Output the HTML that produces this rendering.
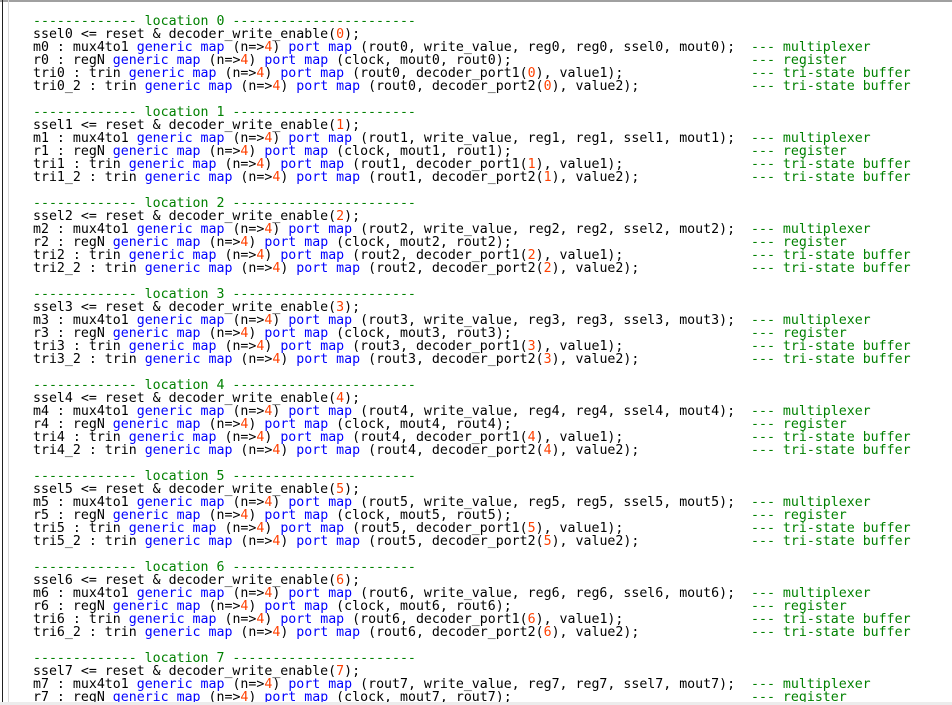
<!DOCTYPE html>
<html><head><meta charset="utf-8"><style>
html,body{margin:0;padding:0;background:#fff;width:952px;height:705px;overflow:hidden;position:relative}
.top{position:absolute;left:0;top:0;width:952px;height:2px;background:#a0a0a0}
.l1{position:absolute;left:2px;top:0;width:1px;height:705px;background:#202020}
.l2{position:absolute;left:8px;top:0;width:1px;height:705px;background:#d8d8d8}
.bot{position:absolute;left:0;top:702px;width:952px;height:3px;background:#ececec}
pre{position:absolute;left:33px;top:15px;margin:0;font-family:"DejaVu Sans Mono","Liberation Mono",monospace;font-size:13.25px;line-height:13px;color:#000;letter-spacing:0}
.k{color:#0000ff}.n{color:#ff4000}.c{color:#008000}
</style></head><body>
<div class="top"></div><div class="l1"></div><div class="l2"></div>
<pre>
<span class="c">------------- location 0 -----------------------</span>
ssel0 &lt;= reset &amp; decoder_write_enable(<span class="n">0</span>);
m0 : mux4to1 <span class="k">generic map</span> (n=&gt;<span class="n">4</span>) <span class="k">port map</span> (rout0, write_value, reg0, reg0, ssel0, mout0);  <span class="c">--- multiplexer</span>
r0 : regN <span class="k">generic map</span> (n=&gt;<span class="n">4</span>) <span class="k">port map</span> (clock, mout0, rout0);                              <span class="c">--- register</span>
tri0 : trin <span class="k">generic map</span> (n=&gt;<span class="n">4</span>) <span class="k">port map</span> (rout0, decoder_port1(<span class="n">0</span>), value1);                <span class="c">--- tri-state buffer</span>
tri0_2 : trin <span class="k">generic map</span> (n=&gt;<span class="n">4</span>) <span class="k">port map</span> (rout0, decoder_port2(<span class="n">0</span>), value2);              <span class="c">--- tri-state buffer</span>

<span class="c">------------- location 1 -----------------------</span>
ssel1 &lt;= reset &amp; decoder_write_enable(<span class="n">1</span>);
m1 : mux4to1 <span class="k">generic map</span> (n=&gt;<span class="n">4</span>) <span class="k">port map</span> (rout1, write_value, reg1, reg1, ssel1, mout1);  <span class="c">--- multiplexer</span>
r1 : regN <span class="k">generic map</span> (n=&gt;<span class="n">4</span>) <span class="k">port map</span> (clock, mout1, rout1);                              <span class="c">--- register</span>
tri1 : trin <span class="k">generic map</span> (n=&gt;<span class="n">4</span>) <span class="k">port map</span> (rout1, decoder_port1(<span class="n">1</span>), value1);                <span class="c">--- tri-state buffer</span>
tri1_2 : trin <span class="k">generic map</span> (n=&gt;<span class="n">4</span>) <span class="k">port map</span> (rout1, decoder_port2(<span class="n">1</span>), value2);              <span class="c">--- tri-state buffer</span>

<span class="c">------------- location 2 -----------------------</span>
ssel2 &lt;= reset &amp; decoder_write_enable(<span class="n">2</span>);
m2 : mux4to1 <span class="k">generic map</span> (n=&gt;<span class="n">4</span>) <span class="k">port map</span> (rout2, write_value, reg2, reg2, ssel2, mout2);  <span class="c">--- multiplexer</span>
r2 : regN <span class="k">generic map</span> (n=&gt;<span class="n">4</span>) <span class="k">port map</span> (clock, mout2, rout2);                              <span class="c">--- register</span>
tri2 : trin <span class="k">generic map</span> (n=&gt;<span class="n">4</span>) <span class="k">port map</span> (rout2, decoder_port1(<span class="n">2</span>), value1);                <span class="c">--- tri-state buffer</span>
tri2_2 : trin <span class="k">generic map</span> (n=&gt;<span class="n">4</span>) <span class="k">port map</span> (rout2, decoder_port2(<span class="n">2</span>), value2);              <span class="c">--- tri-state buffer</span>

<span class="c">------------- location 3 -----------------------</span>
ssel3 &lt;= reset &amp; decoder_write_enable(<span class="n">3</span>);
m3 : mux4to1 <span class="k">generic map</span> (n=&gt;<span class="n">4</span>) <span class="k">port map</span> (rout3, write_value, reg3, reg3, ssel3, mout3);  <span class="c">--- multiplexer</span>
r3 : regN <span class="k">generic map</span> (n=&gt;<span class="n">4</span>) <span class="k">port map</span> (clock, mout3, rout3);                              <span class="c">--- register</span>
tri3 : trin <span class="k">generic map</span> (n=&gt;<span class="n">4</span>) <span class="k">port map</span> (rout3, decoder_port1(<span class="n">3</span>), value1);                <span class="c">--- tri-state buffer</span>
tri3_2 : trin <span class="k">generic map</span> (n=&gt;<span class="n">4</span>) <span class="k">port map</span> (rout3, decoder_port2(<span class="n">3</span>), value2);              <span class="c">--- tri-state buffer</span>

<span class="c">------------- location 4 -----------------------</span>
ssel4 &lt;= reset &amp; decoder_write_enable(<span class="n">4</span>);
m4 : mux4to1 <span class="k">generic map</span> (n=&gt;<span class="n">4</span>) <span class="k">port map</span> (rout4, write_value, reg4, reg4, ssel4, mout4);  <span class="c">--- multiplexer</span>
r4 : regN <span class="k">generic map</span> (n=&gt;<span class="n">4</span>) <span class="k">port map</span> (clock, mout4, rout4);                              <span class="c">--- register</span>
tri4 : trin <span class="k">generic map</span> (n=&gt;<span class="n">4</span>) <span class="k">port map</span> (rout4, decoder_port1(<span class="n">4</span>), value1);                <span class="c">--- tri-state buffer</span>
tri4_2 : trin <span class="k">generic map</span> (n=&gt;<span class="n">4</span>) <span class="k">port map</span> (rout4, decoder_port2(<span class="n">4</span>), value2);              <span class="c">--- tri-state buffer</span>

<span class="c">------------- location 5 -----------------------</span>
ssel5 &lt;= reset &amp; decoder_write_enable(<span class="n">5</span>);
m5 : mux4to1 <span class="k">generic map</span> (n=&gt;<span class="n">4</span>) <span class="k">port map</span> (rout5, write_value, reg5, reg5, ssel5, mout5);  <span class="c">--- multiplexer</span>
r5 : regN <span class="k">generic map</span> (n=&gt;<span class="n">4</span>) <span class="k">port map</span> (clock, mout5, rout5);                              <span class="c">--- register</span>
tri5 : trin <span class="k">generic map</span> (n=&gt;<span class="n">4</span>) <span class="k">port map</span> (rout5, decoder_port1(<span class="n">5</span>), value1);                <span class="c">--- tri-state buffer</span>
tri5_2 : trin <span class="k">generic map</span> (n=&gt;<span class="n">4</span>) <span class="k">port map</span> (rout5, decoder_port2(<span class="n">5</span>), value2);              <span class="c">--- tri-state buffer</span>

<span class="c">------------- location 6 -----------------------</span>
ssel6 &lt;= reset &amp; decoder_write_enable(<span class="n">6</span>);
m6 : mux4to1 <span class="k">generic map</span> (n=&gt;<span class="n">4</span>) <span class="k">port map</span> (rout6, write_value, reg6, reg6, ssel6, mout6);  <span class="c">--- multiplexer</span>
r6 : regN <span class="k">generic map</span> (n=&gt;<span class="n">4</span>) <span class="k">port map</span> (clock, mout6, rout6);                              <span class="c">--- register</span>
tri6 : trin <span class="k">generic map</span> (n=&gt;<span class="n">4</span>) <span class="k">port map</span> (rout6, decoder_port1(<span class="n">6</span>), value1);                <span class="c">--- tri-state buffer</span>
tri6_2 : trin <span class="k">generic map</span> (n=&gt;<span class="n">4</span>) <span class="k">port map</span> (rout6, decoder_port2(<span class="n">6</span>), value2);              <span class="c">--- tri-state buffer</span>

<span class="c">------------- location 7 -----------------------</span>
ssel7 &lt;= reset &amp; decoder_write_enable(<span class="n">7</span>);
m7 : mux4to1 <span class="k">generic map</span> (n=&gt;<span class="n">4</span>) <span class="k">port map</span> (rout7, write_value, reg7, reg7, ssel7, mout7);  <span class="c">--- multiplexer</span>
r7 : regN <span class="k">generic map</span> (n=&gt;<span class="n">4</span>) <span class="k">port map</span> (clock, mout7, rout7);                              <span class="c">--- register</span>
</pre>
<div class="bot"></div>
</body></html>
